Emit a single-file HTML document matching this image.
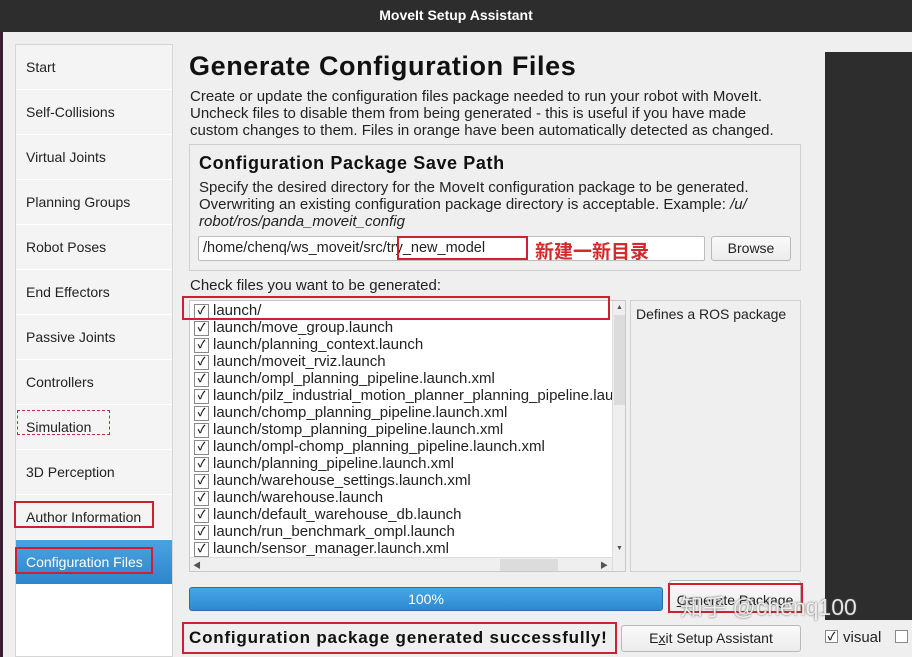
<!DOCTYPE html>
<html><head><meta charset="utf-8"><style>
*{margin:0;padding:0;box-sizing:border-box}
body{width:912px;height:657px;overflow:hidden;background:#efefef;font-family:"Liberation Sans","Noto Sans CJK SC",sans-serif;font-size:14px;color:#222;position:relative}
.a{position:absolute;white-space:nowrap}
.red{border:2px solid #d02030}
.side div{height:45px;line-height:45px;padding-left:10px;border-bottom:1px solid #fff;background:#f4f4f4}
.row{height:17px;line-height:17px;position:relative;padding-left:23px;font-size:15px}
.row:before{content:"✓";position:absolute;left:4px;top:2px;width:13px;height:13px;border:1px solid #888;background:#fff;font-size:11px;line-height:12px;text-align:center;font-weight:bold;color:#222}
.btn{border:1px solid #b8b8b8;border-radius:3px;background:linear-gradient(#fafafa,#ececec);text-align:center}
</style></head><body>
<div class="a" style="left:0;top:0;width:912px;height:32px;background:#2d2d2d;color:#fff;font-weight:bold;font-size:14px;text-align:center;line-height:30px">MoveIt Setup Assistant</div>
<div class="a" style="left:0;top:32px;width:3px;height:625px;background:#3a1f33"></div>

<div class="a side" style="left:15px;top:44px;width:158px;height:613px;background:#fff;border:1px solid #d6d6d6">
<div>Start</div><div>Self-Collisions</div><div>Virtual Joints</div><div>Planning Groups</div><div>Robot Poses</div><div>End Effectors</div><div>Passive Joints</div><div>Controllers</div><div>Simulation</div><div>3D Perception</div><div>Author Information</div><div style="background:linear-gradient(#4aa3e0,#2e86cc);color:#fff">Configuration Files</div>
</div>
<div class="a" style="left:17px;top:410px;width:93px;height:25px;border:1px dashed #c03040"></div>
<div class="a red" style="left:14px;top:501px;width:140px;height:27px"></div>
<div class="a red" style="left:15px;top:547px;width:138px;height:27px"></div>

<div class="a" style="left:189px;top:51px;font-size:27px;letter-spacing:0.6px;font-weight:bold;color:#111">Generate Configuration Files</div>
<div class="a" style="left:190px;top:88px;line-height:17px;font-size:15px">Create or update the configuration files package needed to run your robot with MoveIt.<br>Uncheck files to disable them from being generated - this is useful if you have made<br>custom changes to them. Files in orange have been automatically detected as changed.</div>

<div class="a" style="left:189px;top:144px;width:612px;height:127px;border:1px solid #cfcfcf"></div>
<div class="a" style="left:199px;top:153px;font-size:18px;letter-spacing:0.6px;font-weight:bold;color:#111">Configuration Package Save Path</div>
<div class="a" style="left:199px;top:179px;line-height:17px;font-size:15px">Specify the desired directory for the MoveIt configuration package to be generated.<br>Overwriting an existing configuration package directory is acceptable. Example: <i>/u/</i><br><i>robot/ros/panda_moveit_config</i></div>
<div class="a" style="left:198px;top:236px;width:507px;height:25px;background:#fff;border:1px solid #bdbdbd;border-radius:2px;padding-left:4px;line-height:23px;font-size:14.5px">/home/chenq/ws_moveit/src/try_new_model</div>
<div class="a red" style="left:397px;top:236px;width:131px;height:24px"></div>
<div class="a" style="left:535px;top:237px;font-size:19px;font-weight:bold;color:#d52a2a">新建一新目录</div>
<div class="a btn" style="left:711px;top:236px;width:80px;height:25px;line-height:23px">Browse</div>

<div class="a" style="left:190px;top:277px;font-size:15px">Check files you want to be generated:</div>
<div class="a" style="left:189px;top:300px;width:437px;height:272px;background:#fff;border:1px solid #c8c8c8;overflow:hidden">
<div style="padding-top:1px">
<div class="row">launch/</div><div class="row">launch/move_group.launch</div><div class="row">launch/planning_context.launch</div><div class="row">launch/moveit_rviz.launch</div><div class="row">launch/ompl_planning_pipeline.launch.xml</div><div class="row">launch/pilz_industrial_motion_planner_planning_pipeline.launch.xml</div><div class="row">launch/chomp_planning_pipeline.launch.xml</div><div class="row">launch/stomp_planning_pipeline.launch.xml</div><div class="row">launch/ompl-chomp_planning_pipeline.launch.xml</div><div class="row">launch/planning_pipeline.launch.xml</div><div class="row">launch/warehouse_settings.launch.xml</div><div class="row">launch/warehouse.launch</div><div class="row">launch/default_warehouse_db.launch</div><div class="row">launch/run_benchmark_ompl.launch</div><div class="row">launch/sensor_manager.launch.xml</div>
</div>
<div class="a" style="left:422px;top:0;width:14px;height:271px;background:#efefef;border-left:1px solid #ddd"><div style="position:absolute;top:14px;left:1px;width:12px;height:90px;background:#dcdcdc"></div><div style="position:absolute;top:3px;left:3px;font-size:7px;color:#555">▲</div><div style="position:absolute;top:244px;left:3px;font-size:7px;color:#555">▼</div></div>
<div class="a" style="left:0;top:256px;width:422px;height:15px;background:#efefef;border-top:1px solid #ddd"><div style="position:absolute;left:3px;top:2px;font-size:8px;color:#555">◀</div><div style="position:absolute;left:310px;top:1px;width:58px;height:13px;background:#dcdcdc"></div><div style="position:absolute;left:410px;top:2px;font-size:8px;color:#555">▶</div></div>
</div>
<div class="a red" style="left:182px;top:296px;width:428px;height:24px"></div>

<div class="a" style="left:630px;top:300px;width:171px;height:272px;border:1px solid #cfcfcf;padding:5px 0 0 5px">Defines a ROS package</div>

<div class="a" style="left:825px;top:52px;width:87px;height:568px;background:#2d2d2d"></div>

<div class="a" style="left:189px;top:587px;width:474px;height:24px;border:1px solid #2a6fa8;border-radius:3px;background:linear-gradient(#45a6e6,#2f8ad0);color:#fff;text-align:center;line-height:22px">100%</div>
<div class="a btn" style="left:669px;top:580px;width:132px;height:33px;line-height:38px"><u>G</u>enerate Package</div>
<div class="a red" style="left:668px;top:583px;width:135px;height:30px"></div>
<div class="a" style="left:680px;top:588px;font-size:23px;color:rgba(255,255,255,0.85);text-shadow:0 0 2px #555">知乎 @chenq100</div>

<div class="a red" style="left:182px;top:622px;width:435px;height:32px"></div>
<div class="a" style="left:189px;top:628px;font-size:17px;letter-spacing:0.8px;font-weight:bold;color:#111">Configuration package generated successfully!</div>
<div class="a btn" style="left:621px;top:625px;width:180px;height:27px;line-height:25px">E<u>x</u>it Setup Assistant</div>
<div class="a" style="left:825px;top:630px;width:13px;height:13px;border:1px solid #888;background:#fff;font-size:11px;line-height:12px;text-align:center;font-weight:bold">✓</div>
<div class="a" style="left:843px;top:629px;font-size:15px">visual</div>
<div class="a" style="left:895px;top:630px;width:13px;height:13px;border:1px solid #888;background:#fff"></div>
</body></html>
